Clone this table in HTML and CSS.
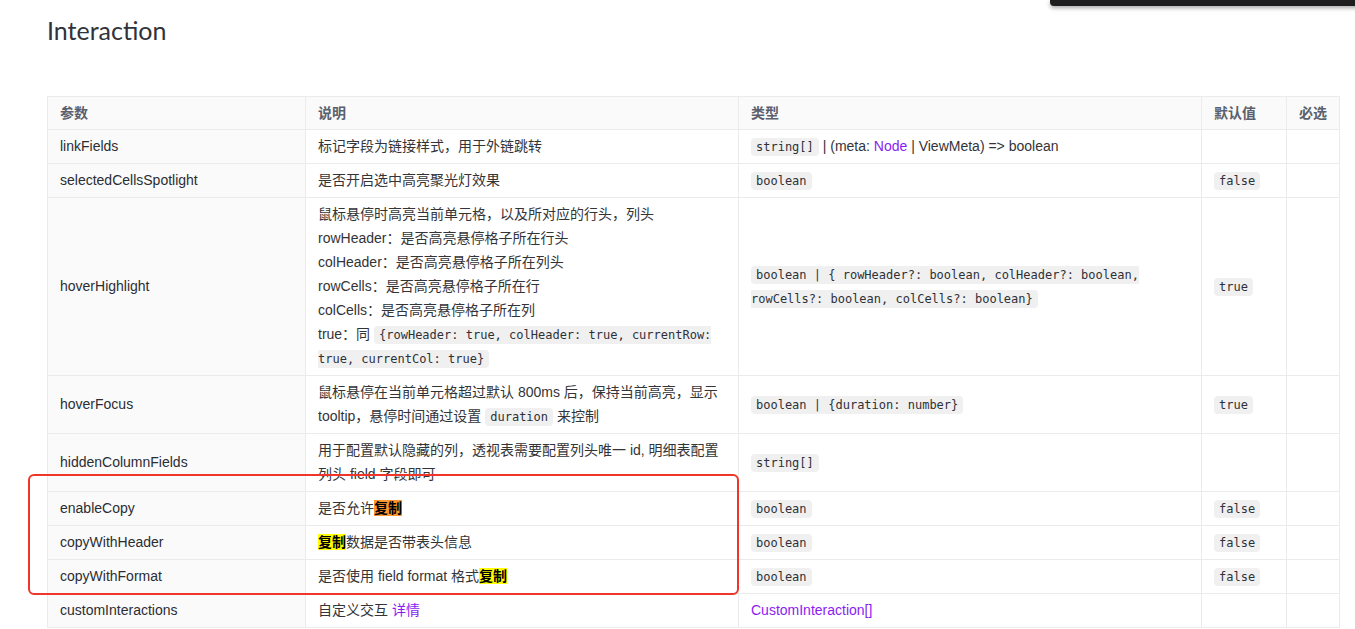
FILE: index.html
```html
<!DOCTYPE html>
<html lang="zh-CN">
<head>
<meta charset="utf-8">
<title>Interaction</title>
<link rel="stylesheet" href="styles.css">
</head>
<body>
<div class="topbar"></div>
<main class="page">
  <h1 class="title">Interaction</h1>
  <table class="api">
    <colgroup>
      <col class="c-name">
      <col class="c-desc">
      <col class="c-type">
      <col class="c-def">
      <col class="c-req">
    </colgroup>
    <thead>
      <tr><th>参数</th><th>说明</th><th>类型</th><th>默认值</th><th>必选</th></tr>
    </thead>
    <tbody>
      <tr>
        <td>linkFields</td>
        <td>标记字段为链接样式，用于外链跳转</td>
        <td><code>string[]</code> | (meta: <a class="link">Node</a> | ViewMeta) =&gt; boolean</td>
        <td></td><td></td>
      </tr>
      <tr>
        <td>selectedCellsSpotlight</td>
        <td>是否开启选中高亮聚光灯效果</td>
        <td><code>boolean</code></td>
        <td><code>false</code></td><td></td>
      </tr>
      <tr>
        <td>hoverHighlight</td>
        <td>鼠标悬停时高亮当前单元格，以及所对应的行头，列头<br>rowHeader：是否高亮悬停格子所在行头<br>colHeader：是否高亮悬停格子所在列头<br>rowCells：是否高亮悬停格子所在行<br>colCells：是否高亮悬停格子所在列<br>true：同 <code>{rowHeader: true, colHeader: true, currentRow: true, currentCol: true}</code></td>
        <td><code>boolean | { rowHeader?: boolean, colHeader?: boolean, rowCells?: boolean, colCells?: boolean}</code></td>
        <td><code>true</code></td><td></td>
      </tr>
      <tr>
        <td>hoverFocus</td>
        <td>鼠标悬停在当前单元格超过默认 800ms 后，保持当前高亮，显示 tooltip，悬停时间通过设置 <code>duration</code> 来控制</td>
        <td><code>boolean | {duration: number}</code></td>
        <td><code>true</code></td><td></td>
      </tr>
      <tr>
        <td>hiddenColumnFields</td>
        <td>用于配置默认隐藏的列，透视表需要配置列头唯一 id, 明细表配置列头 field 字段即可</td>
        <td><code>string[]</code></td>
        <td></td><td></td>
      </tr>
      <tr>
        <td>enableCopy</td>
        <td>是否允许<mark class="hit current">复制</mark></td>
        <td><code>boolean</code></td>
        <td><code>false</code></td><td></td>
      </tr>
      <tr>
        <td>copyWithHeader</td>
        <td><mark class="hit">复制</mark>数据是否带表头信息</td>
        <td><code>boolean</code></td>
        <td><code>false</code></td><td></td>
      </tr>
      <tr>
        <td>copyWithFormat</td>
        <td>是否使用 field format 格式<mark class="hit">复制</mark></td>
        <td><code>boolean</code></td>
        <td><code>false</code></td><td></td>
      </tr>
      <tr>
        <td>customInteractions</td>
        <td>自定义交互 <a class="link">详情</a></td>
        <td><a class="link">CustomInteraction[]</a></td>
        <td></td><td></td>
      </tr>
    </tbody>
  </table>
</main>
<div class="annotation"></div>
</body>
</html>
```

FILE: styles.css
```css
html, body {
  margin: 0;
  padding: 0;
  background: #ffffff;
}

body {
  font-family: "Liberation Sans", "Noto Sans CJK SC", Arial, sans-serif;
  color: #333438;
  font-size: 14px;
  overflow: hidden;
  height: 629px;
}

.page {
  padding: 0 16px 0 47px;
}

.title {
  margin: 12px 0 0;
  font-family: "Lato", "Liberation Sans", sans-serif;
  font-weight: 400;
  font-size: 25px;
  line-height: 36px;
  color: #30333a;
}

.api {
  margin-top: 48px;
  width: 1292px;
  border-collapse: collapse;
  table-layout: fixed;
}

.c-name { width: 258px; }
.c-desc { width: 433px; }
.c-type { width: 463px; }
.c-def { width: 85px; }
.c-req { width: 53px; }

.api th,
.api td {
  border: 1px solid #ebebeb;
  padding: 4px 12px 5px;
  line-height: 24px;
  text-align: left;
  vertical-align: middle;
}

.api th {
  padding: 4px 12px;
  background: #fafafa;
  color: #5a606c;
  font-weight: 600;
  font-size: 14px;
}

.api td:first-child {
  background: #fafafa;
  color: #2b2d33;
}

code {
  font-family: "DejaVu Sans Mono", "Liberation Mono", monospace;
  font-size: 12px;
  line-height: 12px;
  background: #f0f0f1;
  color: #2f3036;
  border-radius: 4px;
  padding: 2px 5px;
}

.link {
  color: #8a1cf2;
  text-decoration: none;
}

.hit {
  color: #000;
  font-weight: 600;
  padding: 0;
  background: #ffff00;
}

.hit.current {
  background: #ff9632;
}

.topbar {
  position: absolute;
  top: 0;
  left: 1050px;
  width: 320px;
  height: 6px;
  background: #1e1e20;
  border-bottom-left-radius: 4px;
  box-shadow: 0 2px 4px rgba(0, 0, 0, 0.35);
}

.annotation {
  position: absolute;
  left: 28px;
  top: 474px;
  width: 707px;
  height: 117px;
  border: 2px solid #f0362b;
  border-radius: 6px;
  pointer-events: none;
}
```
